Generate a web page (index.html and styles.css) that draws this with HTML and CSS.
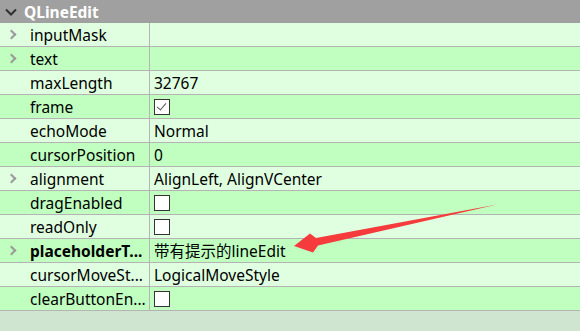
FILE: index.html
```html
<!DOCTYPE html>
<html lang="zh">
<head>
    <meta charset="UTF-8">
    <title>QLineEdit</title>
    <link rel="stylesheet" href="styles.css">
</head>
<body>
    <div class="editor">
        <div class="group">
            <svg class="chev-down" width="12" height="8" viewBox="0 0 12 8"><path d="M1 1.5 L6 6.5 L11 1.5" fill="none" stroke="#303030" stroke-width="2"/></svg>
            <span>QLineEdit</span>
        </div>

        <div class="row light"><div class="name"><i class="exp"></i>inputMask</div><div class="value"></div></div>
        <div class="row dark"><div class="name"><i class="exp"></i>text</div><div class="value"></div></div>
        <div class="row light"><div class="name">maxLength</div><div class="value">32767</div></div>
        <div class="row dark"><div class="name">frame</div><div class="value"><span class="check on"></span></div></div>
        <div class="row light"><div class="name">echoMode</div><div class="value">Normal</div></div>
        <div class="row dark"><div class="name">cursorPosition</div><div class="value">0</div></div>
        <div class="row light"><div class="name"><i class="exp"></i>alignment</div><div class="value">AlignLeft, AlignVCenter</div></div>
        <div class="row dark"><div class="name">dragEnabled</div><div class="value"><span class="check"></span></div></div>
        <div class="row light"><div class="name">readOnly</div><div class="value"><span class="check"></span></div></div>
        <div class="row dark"><div class="name bold"><i class="exp"></i>placeholderT...</div><div class="value">带有提示的lineEdit</div></div>
        <div class="row light"><div class="name">cursorMoveSt...</div><div class="value">LogicalMoveStyle</div></div>
        <div class="row dark"><div class="name">clearButtonEn...</div><div class="value"><span class="check"></span></div></div>
    </div>

    <!-- 标注箭头 -->
    <svg class="arrow" width="580" height="331" viewBox="0 0 580 331">
        <polygon points="497,204.5 316,238 310,233.5 294,246 313,252.5 318,245.5" fill="#f53b3b"/>
    </svg>
</body>
</html>
```

FILE: styles.css
```css
html, body {
    margin: 0;
    padding: 0;
}
body {
    width: 580px;
    height: 331px;
    overflow: hidden;
    background: #cfe5cf;
    font-family: "Noto Sans", "Noto Sans CJK SC", sans-serif;
    font-size: 15.5px;
    color: #000;
    position: relative;
}
.group {
    height: 23px;
    background: #a0a0a0;
    color: #fff;
    font-weight: bold;
    display: flex;
    align-items: center;
    padding-left: 5px;
    gap: 7px;
}
.row {
    display: flex;
    height: 23px;
    border-bottom: 1px solid #b4b4b4;
    line-height: 24px;
}
.row.light {
    background: #e0ffe0;
}
.row.dark {
    background: #c0ffc0;
}
.name {
    width: 150px;
    box-sizing: border-box;
    padding-left: 30px;
    border-right: 1px solid #b4b4b4;
    position: relative;
    white-space: nowrap;
    overflow: hidden;
}
.name.bold {
    font-weight: bold;
}
.value {
    flex: 1;
    padding-left: 4px;
    display: flex;
    align-items: center;
}
/* 展开箭头 */
.exp {
    position: absolute;
    left: 8px;
    top: 8px;
    width: 5px;
    height: 5px;
    border-top: 2px solid #9a9a9a;
    border-right: 2px solid #9a9a9a;
    transform: rotate(45deg);
}
.check {
    width: 14px;
    height: 14px;
    background: #fff;
    border: 1px solid #333;
    position: relative;
}
.check.on::after {
    content: "";
    position: absolute;
    left: 4px;
    top: 1px;
    width: 4px;
    height: 8px;
    border-right: 1.5px solid #555;
    border-bottom: 1.5px solid #555;
    transform: rotate(40deg);
}
.arrow {
    position: absolute;
    left: 0;
    top: 0;
    pointer-events: none;
}
```
